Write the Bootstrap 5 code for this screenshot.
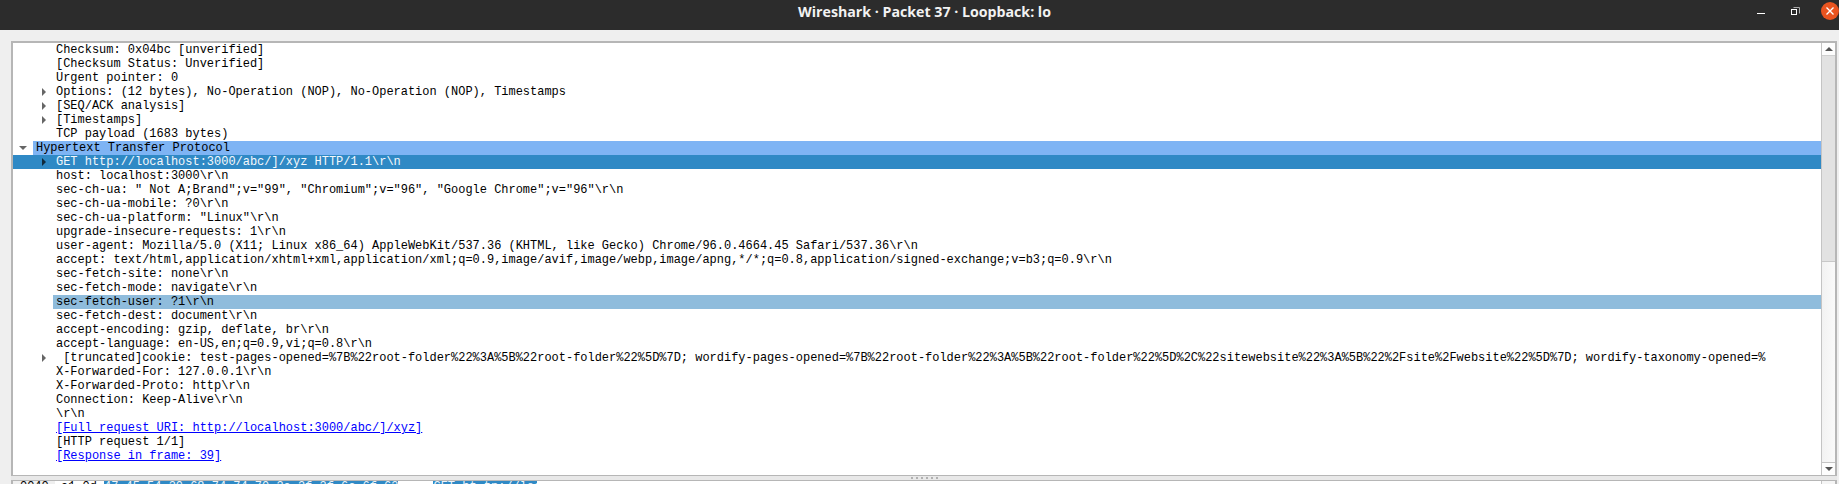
<!DOCTYPE html>
<html lang="en">
<head>
<meta charset="utf-8">
<title>Wireshark · Packet 37 · Loopback: lo</title>
<link href="https://cdn.jsdelivr.net/npm/bootstrap@5.3.0/dist/css/bootstrap.min.css" rel="stylesheet">
<style>
html, body { height: 484px; overflow: hidden; }
body { background: #efefef; font-family: "Liberation Mono", monospace; font-size: 11.975px; }
.ws-title { height: 30px; background: #2c2c2c; color: #f2f2f2; font: 700 14.2px/24px "Open Sans", "Noto Sans", sans-serif; }
.ws-title-text { position: absolute; left: 10px; right: 0; top: 0; text-align: center; }
.ws-winbtns { margin-left: auto; height: 30px; padding-top: 2px; }
.ws-min { width: 8px; height: 1px; margin: 11px 26px 0 0; background: #fff; }
.ws-rest { margin-top: 5px; }
.ws-close { width: 18px; height: 18px; border-radius: 50%; background: #e95420; margin-left: 21px; }
.ws-body { padding: 11px 2px 0 11px; height: 454px; overflow: hidden; }
.ws-tree { height: 435px; border: 2px solid #b6b6b6; border-bottom-width: 1px; background: #fff; }
.ws-rows { flex: 1 1 auto; min-width: 0; overflow: hidden; }
.ws-row { height: 14px; line-height: 15px; white-space: pre; color: #000; padding-left: 43px; position: relative; }
.ws-row a { color: #0000ff; text-decoration: underline; }
.ws-tw { position: absolute; left: 29px; top: 3px; width: 0; height: 0; border-style: solid; border-width: 4px 0 4px 4px; border-color: transparent transparent transparent #666; }
.ws-tw-open { left: -14px; top: 5px; border-width: 4px 4px 0 4px; border-color: #666 transparent transparent transparent; }
.ws-proto { margin-left: 20px; padding-left: 3px; background: #7eb4f4; overflow: visible; }
.ws-cur { background: #2f89c5; color: #f4f8fb; }
.ws-cur .ws-tw { border-left-color: #0f2a3c; }
.ws-sel::before { content: ""; position: absolute; left: 40px; right: 0; top: 0; bottom: 0; background: #8fbcdc; }
.ws-sel span { position: relative; }
.ws-sb { width: 14px; border-left: 1px solid #c4c4c4; background: linear-gradient(90deg, #f2f2f2, #fafafa); }
.ws-sb-btn { height: 13px; background: #fdfdfd; flex: none; }
.ws-sb-up { border-bottom: 1px solid #d0d0d0; }
.ws-sb-dn { border-top: 1px solid #c4c4c4; }
.ws-sb-arrow-u { width: 0; height: 0; border: 4px solid transparent; border-top: 0; border-bottom-color: #555; }
.ws-sb-arrow-d { width: 0; height: 0; border: 4px solid transparent; border-bottom: 0; border-top-color: #555; }
.ws-thumb { height: 206px; background: #e2e2e2; border-bottom: 1px solid #c8c8c8; flex: none; }
.ws-track { flex: 1 1 auto; }
.ws-splitter { height: 4px; background: #e8e8e8; gap: 3px; }
.ws-dot { width: 2px; height: 2px; background: #b0b0b0; }
.ws-hex { height: 4px; overflow: hidden; border: 2px solid #b6b6b6; border-width: 1px 2px 0; background: #fff; white-space: pre; line-height: 12px; color: #000; }
.ws-hexrow { flex: 1 1 auto; min-width: 0; overflow: hidden; }
.ws-hexrow span { display: inline-block; height: 14px; vertical-align: top; overflow: hidden; }
.ws-off { width: 42px; padding-left: 7px; background: #efefef; }
.ws-hl { background: #2f89c5; color: #eef5fa; }
.ws-gap1 { width: 49px; padding-left: 6px; }
.ws-gap2 { width: 35px; }
.ws-asc { width: 104px; }
.ws-hexsb { width: 14px; border-left: 1px solid #c4c4c4; background: #f5f5f5; }
</style>
</head>
<body>
<div class="ws-title d-flex position-relative">
  <div class="ws-title-text">Wireshark · Packet 37 · Loopback: lo</div>
  <div class="ws-winbtns d-flex align-items-start">
    <div class="ws-min"></div>
    <svg class="ws-rest" width="9" height="9" viewBox="0 0 9 9"><path d="M2.500 .5H8.500V6.500" fill="none" stroke="#aaa"/><rect x=".5" y="2.500" width="5" height="5" fill="none" stroke="#fff"/></svg>
    <div class="ws-close d-flex align-items-center justify-content-center"><svg width="10" height="10" viewBox="0 0 10 10"><path d="M1.500 1.500L8.500 8.500M8.500 1.500L1.500 8.500" stroke="#fff" stroke-width="1.400"/></svg></div>
  </div>
</div>
<div class="ws-body">
  <div class="ws-tree d-flex">
    <div class="ws-rows">
      <div class="ws-row">Checksum: 0x04bc [unverified]</div>
      <div class="ws-row">[Checksum Status: Unverified]</div>
      <div class="ws-row">Urgent pointer: 0</div>
      <div class="ws-row"><i class="ws-tw"></i>Options: (12 bytes), No-Operation (NOP), No-Operation (NOP), Timestamps</div>
      <div class="ws-row"><i class="ws-tw"></i>[SEQ/ACK analysis]</div>
      <div class="ws-row"><i class="ws-tw"></i>[Timestamps]</div>
      <div class="ws-row">TCP payload (1683 bytes)</div>
      <div class="ws-row ws-proto"><i class="ws-tw ws-tw-open"></i>Hypertext Transfer Protocol</div>
      <div class="ws-row ws-cur"><i class="ws-tw"></i>GET http://localhost:3000/abc/]/xyz HTTP/1.1\r\n</div>
      <div class="ws-row">host: localhost:3000\r\n</div>
      <div class="ws-row">sec-ch-ua: " Not A;Brand";v="99", "Chromium";v="96", "Google Chrome";v="96"\r\n</div>
      <div class="ws-row">sec-ch-ua-mobile: ?0\r\n</div>
      <div class="ws-row">sec-ch-ua-platform: "Linux"\r\n</div>
      <div class="ws-row">upgrade-insecure-requests: 1\r\n</div>
      <div class="ws-row">user-agent: Mozilla/5.0 (X11; Linux x86_64) AppleWebKit/537.36 (KHTML, like Gecko) Chrome/96.0.4664.45 Safari/537.36\r\n</div>
      <div class="ws-row">accept: text/html,application/xhtml+xml,application/xml;q=0.9,image/avif,image/webp,image/apng,*/*;q=0.8,application/signed-exchange;v=b3;q=0.9\r\n</div>
      <div class="ws-row">sec-fetch-site: none\r\n</div>
      <div class="ws-row">sec-fetch-mode: navigate\r\n</div>
      <div class="ws-row ws-sel"><span>sec-fetch-user: ?1\r\n</span></div>
      <div class="ws-row">sec-fetch-dest: document\r\n</div>
      <div class="ws-row">accept-encoding: gzip, deflate, br\r\n</div>
      <div class="ws-row">accept-language: en-US,en;q=0.9,vi;q=0.8\r\n</div>
      <div class="ws-row"><i class="ws-tw"></i> [truncated]cookie: test-pages-opened=%7B%22root-folder%22%3A%5B%22root-folder%22%5D%7D; wordify-pages-opened=%7B%22root-folder%22%3A%5B%22root-folder%22%5D%2C%22sitewebsite%22%3A%5B%22%2Fsite%2Fwebsite%22%5D%7D; wordify-taxonomy-opened=%</div>
      <div class="ws-row">X-Forwarded-For: 127.0.0.1\r\n</div>
      <div class="ws-row">X-Forwarded-Proto: http\r\n</div>
      <div class="ws-row">Connection: Keep-Alive\r\n</div>
      <div class="ws-row">\r\n</div>
      <div class="ws-row"><a href="#">[Full request URI: http://localhost:3000/abc/]/xyz]</a></div>
      <div class="ws-row">[HTTP request 1/1]</div>
      <div class="ws-row"><a href="#">[Response in frame: 39]</a></div>
    </div>
    <div class="ws-sb d-flex flex-column">
      <div class="ws-sb-btn ws-sb-up d-flex align-items-center justify-content-center"><i class="ws-sb-arrow-u"></i></div>
      <div class="ws-thumb"></div>
      <div class="ws-track"></div>
      <div class="ws-sb-btn ws-sb-dn d-flex align-items-center justify-content-center"><i class="ws-sb-arrow-d"></i></div>
    </div>
  </div>
  <div class="ws-splitter d-flex justify-content-center align-items-center">
    <i class="ws-dot"></i><i class="ws-dot"></i><i class="ws-dot"></i><i class="ws-dot"></i><i class="ws-dot"></i><i class="ws-dot"></i>
  </div>
  <div class="ws-hex d-flex">
    <div class="ws-hexrow"><span class="ws-off">0040</span><span class="ws-gap1">a1 0d </span><span class="ws-hl">47 45 54 20 68 74 74 70 3a 2f 2f 6c 6f 63</span><span class="ws-gap2"></span><span class="ws-hl ws-asc">GET ht tp://loc</span></div>
    <div class="ws-hexsb"></div>
  </div>
</div>
</body>
</html>
